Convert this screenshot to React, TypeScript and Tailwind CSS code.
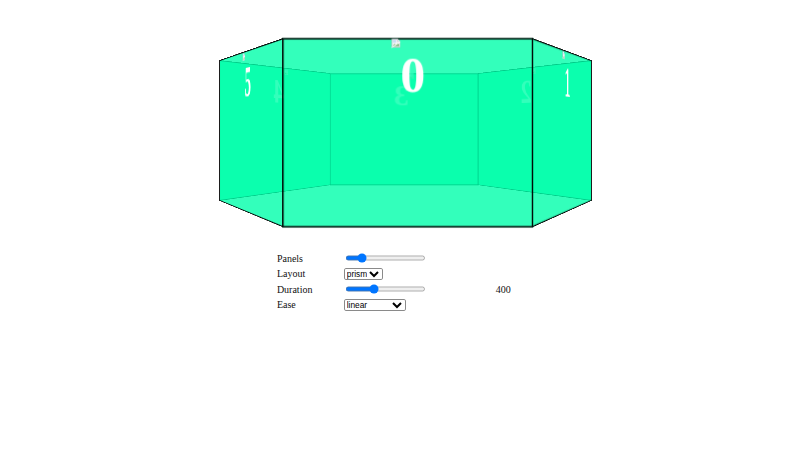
const faces = [
  { n: "0", t: "[transform:rotateY(0deg)_translateZ(161px)]" },
  { n: "1", t: "[transform:rotateY(60deg)_translateZ(161px)]" },
  { n: "2", t: "[transform:rotateY(120deg)_translateZ(161px)]" },
  { n: "3", t: "[transform:rotateY(180deg)_translateZ(161px)]" },
  { n: "4", t: "[transform:rotateY(240deg)_translateZ(161px)]" },
  { n: "5", t: "[transform:rotateY(300deg)_translateZ(161px)]" },
];

function BrokenImage() {
  return (
    <svg viewBox="0 0 16 16" className="w-[7.5px] h-[7.5px] shrink-0 mt-[0.5px]">
      <path d="M1.5 1.5h9l4 4v9h-13z" fill="#f4f6f8" stroke="#b5b9bd" />
      <path d="M10.5 1.5v4h4" fill="#fff" stroke="#b5b9bd" />
      <path d="M3 12l3-3 2 2 3-3 2 2v3H3z" fill="#7fb87a" />
      <path d="M3 3h5v4H3z" fill="#c6d9f4" />
      <path d="M1 15L15 6" stroke="#fff" strokeWidth="1.5" />
    </svg>
  );
}

export default function App() {
  return (
    <div className="w-[800px] h-[450px] bg-white overflow-hidden font-['Liberation_Serif',serif]">
      <div className="relative w-[800px] h-[250px] [perspective:630px] [perspective-origin:399px_124px]">
        <div className="absolute left-[312px] top-[59.7px] w-[187px] h-[141px] [transform-style:preserve-3d]">
          {faces.map((f) => (
            <div
              key={f.n}
              className={`absolute inset-0 flex items-start justify-center bg-[rgba(0,255,170,0.8)] shadow-[inset_0_0_0_1.1px_#000] text-white font-bold text-[37px] leading-[55px] ${f.t}`}
            >
              <BrokenImage />
              <span>{f.n}</span>
            </div>
          ))}
        </div>
      </div>
      <div className="[zoom:0.625] text-[16px] text-[#111] grid grid-cols-[107px_243px_auto] auto-rows-[24.8px] items-center w-[394px] ml-[443px] mt-px whitespace-nowrap">
        <span>Panels</span>
        <div className="flex items-center">
          <input type="range" min={3} max={20} defaultValue={6} className="[all:revert]" />
        </div>
        <span />
        <span>Layout</span>
        <div className="flex items-center">
          <select defaultValue="prism" className="[all:revert] w-[62px]! border-[#8a8a8a]! rounded-[3px]! bg-white!">
            <option>prism</option>
            <option>ring</option>
          </select>
        </div>
        <span />
        <span>Duration</span>
        <div className="flex items-center">
          <input type="range" min={100} max={1000} defaultValue={400} className="[all:revert]" />
        </div>
        <span>400</span>
        <span>Ease</span>
        <div className="flex items-center">
          <select defaultValue="linear" className="[all:revert] w-[99px]! border-[#8a8a8a]! rounded-[3px]! bg-white!">
            <option>linear</option>
            <option>ease-in-out</option>
          </select>
        </div>
        <span />
      </div>
    </div>
  );
}
